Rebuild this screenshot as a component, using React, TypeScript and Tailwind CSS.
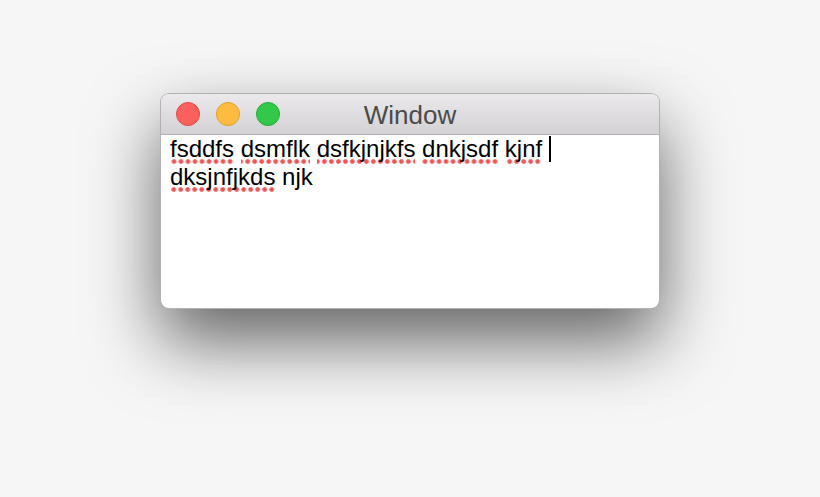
import React from 'react';

const typo =
  'pb-[2px] bg-[radial-gradient(circle_at_3.5px_2.5px,#ec4a4a_0,#f05c5c_1.6px,rgba(240,100,100,0.75)_2.2px,transparent_2.7px)] bg-[length:7px_5px] bg-repeat-x bg-bottom';

function Typo({ children }: { children: React.ReactNode }) {
  return <span className={typo}>{children}</span>;
}

function Light({ fill, ring }: { fill: string; ring: string }) {
  return <span className={`block w-[24px] h-[24px] rounded-full border ${fill} ${ring}`} />;
}

export default function App() {
  return (
    <div
      className="w-full h-[497px] bg-[#f6f6f6] flex justify-center pt-[93px]"
      style={{ fontFamily: '"Liberation Sans", Arial, sans-serif' }}
    >
      <div className="w-[500px] h-[216px] bg-white rounded-[9px] border border-[rgba(0,0,0,0.3)] overflow-hidden shadow-[0_32px_70px_0_rgba(0,0,0,0.6)] flex flex-col">
        <div className="relative h-[41px] shrink-0 border-b border-[#b3b1b3] bg-gradient-to-b from-[#ebe9eb] to-[#d3d1d3] flex items-center pl-[15px] gap-[16px]">
          <Light fill="bg-[#fc605c]" ring="border-[#de4a46]" />
          <Light fill="bg-[#fdbc40]" ring="border-[#dea123]" />
          <Light fill="bg-[#34c84a]" ring="border-[#27aa35]" />
          <span className="absolute inset-0 flex items-center justify-center text-[26px] text-[#4a4a4a] pt-[3px]">
            Window
          </span>
        </div>
        <div className="px-[9px] text-[24px] leading-[28px] text-black">
          <Typo>fsddfs</Typo> <Typo>dsmflk</Typo> <Typo>dsfkjnjkfs</Typo> <Typo>dnkjsdf</Typo>{' '}
          <Typo>kjnf</Typo>{' '}
          <span className="inline-block w-[2px] h-[26px] bg-black align-[-5px]" />
          <br />
          <Typo>dksjnfjkds</Typo> njk
        </div>
      </div>
    </div>
  );
}
